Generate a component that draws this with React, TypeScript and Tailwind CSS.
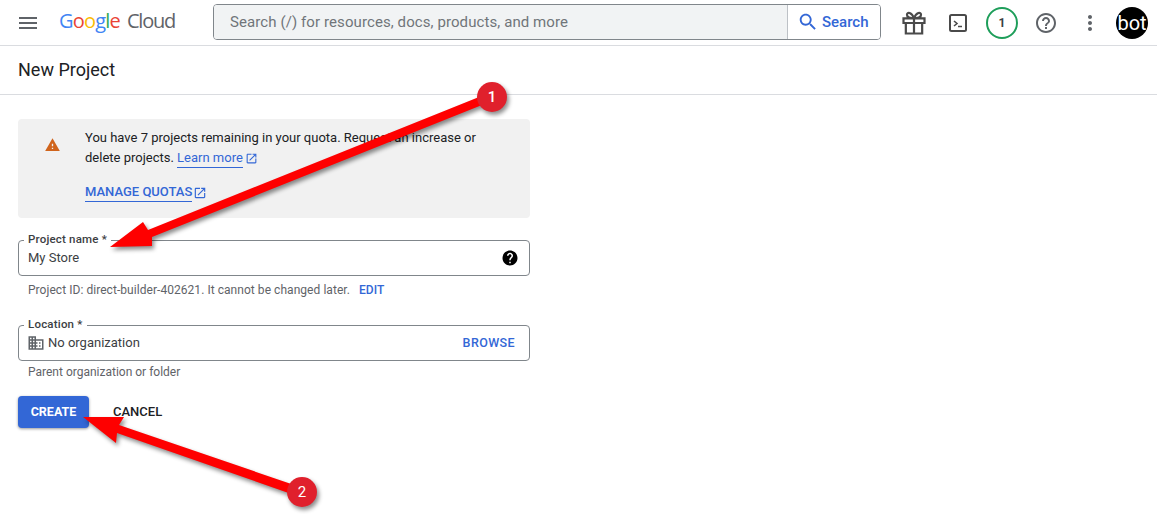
const P = ({ d, className }: { d: string; className: string }) => (
  <svg viewBox="0 0 24 24" className={className} fill="currentColor"><path d={d} /></svg>
);
const OPEN = "M19 19H5V5h7V3H5c-1.11 0-2 .9-2 2v14c0 1.1.89 2 2 2h14c1.1 0 2-.9 2-2v-7h-2v7zM14 3v2h3.59l-9.83 9.83 1.41 1.41L19 6.41V10h2V3h-7z";

function Header() {
  return (
    <header className="flex h-[46px] items-center border-b border-[#dadce0] bg-white">
      <P d="M3 18h18v-2H3v2zm0-5h18v-2H3v2zm0-7v2h18V6H3z" className="ml-[16px] h-6 w-6 text-[#5f6368]" />
      <div className="ml-[19px] -mt-[3px] mb-0 flex w-[154px] items-baseline font-['Open_Sans',sans-serif] text-[20px] tracking-[-0.8px]">
        <span className="text-[#4285f4]">G</span>
        <span className="text-[#ea4335]">o</span>
        <span className="text-[#fbbc05]">o</span>
        <span className="text-[#4285f4]">g</span>
        <span className="text-[#34a853]">l</span>
        <span className="text-[#ea4335]">e</span>
        <span className="ml-[7px] tracking-[-1.2px] text-[#5f6368]">Cloud</span>
      </div>
      <div className="-mt-[1px] flex h-[36px] w-[668px] overflow-hidden rounded-[4px] border border-[#80868b]">
        <div className="flex flex-1 items-center border-r border-[#bdc1c6] bg-[#f1f3f4] pl-[16px] text-[15px] tracking-[0.09px] text-[#70757a]">
          Search (/) for resources, docs, products, and more
        </div>
        <div className="flex w-[92px] items-center gap-[3px] bg-white pl-[9px] text-[15px] font-medium text-[#3367d6]">
          <P d="M15.5 14h-.79l-.28-.27C15.41 12.59 16 11.11 16 9.5 16 5.91 13.09 3 9.5 3S3 5.91 3 9.5 5.91 16 9.5 16c1.61 0 3.09-.59 4.23-1.57l.27.28v.79l5 4.99L20.49 19l-4.99-5zm-6 0C7.01 14 5 11.99 5 9.5S7.01 5 9.5 5 14 7.01 14 9.5 11.99 14 9.5 14z" className="h-[22px] w-[22px]" />
          Search
        </div>
      </div>
      <div className="ml-[21px] flex items-center text-[#5f6368]">
        <svg viewBox="0 0 24 24" className="-mx-[2px] h-[28px] w-[28px] text-[#4a4a4a]" fill="none" stroke="currentColor" strokeWidth="1.9">
          <path d="M3 8h18v4H3zM5 12v9h14v-9M12 8v13M12 8C10 3 6 2 6 5c0 2 3 3 6 3zM12 8c2-5 6-6 6-3 0 2-3 3-6 3z" />
        </svg>
        <svg viewBox="0 0 24 24" className="ml-[20px] h-6 w-6 text-[#4a4a4a]" fill="none" stroke="currentColor" strokeWidth="2">
          <rect x="4" y="4" width="16" height="16" rx="1.5" />
          <path d="M8 10l3 2.5L8 15M12 15.5h4" strokeWidth="1.6" />
        </svg>
        <div className="ml-[16px] flex h-8 w-8 items-center justify-center rounded-full border-2 border-[#1e9e5a] text-[12px] font-bold text-[#3c4043]">1</div>
        <P d="M11 18h2v-2h-2v2zm1-16C6.48 2 2 6.48 2 12s4.48 10 10 10 10-4.48 10-10S17.52 2 12 2zm0 18c-4.41 0-8-3.59-8-8s3.59-8 8-8 8 3.59 8 8-3.59 8-8 8zm0-14c-2.21 0-4 1.79-4 4h2c0-1.1.9-2 2-2s2 .9 2 2c0 2-3 1.75-3 5h2c0-2.25 3-2.5 3-5 0-2.21-1.79-4-4-4z" className="ml-[16px] h-6 w-6" />
        <P d="M12 8c1.1 0 2-.9 2-2s-.9-2-2-2-2 .9-2 2 .9 2 2 2zm0 2c-1.1 0-2 .9-2 2s.9 2 2 2 2-.9 2-2-.9-2-2-2zm0 6c-1.1 0-2 .9-2 2s.9 2 2 2 2-.9 2-2-.9-2-2-2z" className="ml-[20px] h-6 w-6" />
        <div className="ml-[14px] flex h-8 w-8 items-center justify-center overflow-hidden rounded-full bg-black text-[20px] leading-none text-white">bot</div>
      </div>
    </header>
  );
}

function Notice() {
  return (
    <div className="flex h-[99px] rounded-[4px] bg-[#f1f1f1]">
      <P d="M1 21h22L12 2 1 21zm12-3h-2v-2h2v2zm0-4h-2v-4h2v4z" className="ml-[26px] mt-[18px] h-[16px] w-[17px] text-[#d0641c]" />
      <div className="ml-[24px] w-[410px] pt-[9px] text-[13px] leading-[20px] text-[#202124]">
        <div>You have 7 projects remaining in your quota. Request an increase or</div>
        <div className="flex items-center">
          delete projects.&nbsp;<span className="border-b border-[#3367d6] leading-[18px] text-[#3367d6]">Learn more</span>
          <P d={OPEN} className="ml-[2px] h-[13px] w-[13px] text-[#3367d6]" />
        </div>
        <div className="mt-[15px] flex items-center font-medium text-[#3367d6]">
          <span className="border-b border-[#3367d6] leading-[18px]">MANAGE QUOTAS</span>
          <P d={OPEN} className="ml-[1px] h-[14px] w-[14px]" />
        </div>
      </div>
    </div>
  );
}

function Field({ label, children }: { label: string; children: React.ReactNode }) {
  return (
    <div className="relative flex h-[36px] items-center rounded-[4px] border border-[#80868b] pl-[9px] pr-[11px] text-[13px] text-[#3c4043]">
      <span className="absolute -top-[10px] left-[5px] bg-white px-[4px] text-[11.5px] font-medium leading-[16px] tracking-[0.2px] text-[#3c4043]">{label}</span>
      {children}
    </div>
  );
}

function Arrows() {
  return (
    <svg className="pointer-events-none absolute left-0 top-0 h-[514px] w-[1157px] drop-shadow-[2px_3px_2px_rgba(0,0,0,0.45)]" viewBox="0 0 1157 514">
      <polygon fill="#fe0000" points="110,247 143,222 148,230 489,93 492,101 152,237 152,246" />
      <polygon fill="#fe0000" points="83,417 124,417 119,425 303,488 300,497 117,433 116,443" />
      <circle cx="492" cy="97" r="15" fill="#e0202c" />
      <circle cx="302" cy="492" r="15" fill="#e0202c" />
    </svg>
  );
}

export default function App() {
  return (
    <div className="relative h-[514px] w-[1157px] overflow-hidden bg-white font-['Roboto',sans-serif]">
      <Header />
      <div className="flex h-[49px] items-center border-b border-[#dadce0] pb-[2px] pl-[18px] text-[18px] text-[#202124]">New Project</div>
      <main className="ml-[18px] w-[512px] pt-[24px]">
        <Notice />
        <div className="mt-[22px]">
          <Field label="Project name *">
            <span className="flex-1">My Store</span>
            <P d="M12 2C6.48 2 2 6.48 2 12s4.48 10 10 10 10-4.48 10-10S17.52 2 12 2zm1 17h-2v-2h2v2zm2.07-7.75l-.9.92C13.45 12.9 13 13.5 13 15h-2v-.5c0-1.1.45-2.1 1.17-2.83l1.24-1.26c.37-.36.59-.86.59-1.41 0-1.1-.9-2-2-2s-2 .9-2 2H8c0-2.21 1.79-4 4-4s4 1.79 4 4c0 .88-.36 1.68-.93 2.25z" className="-mr-[1px] h-[18px] w-[18px] text-black" />
          </Field>
          <div className="mt-[6px] flex pl-[10px] text-[12px] leading-[16px] tracking-[0.05px] text-[#5f6368]">
            Project ID: direct-builder-402621. It cannot be changed later.
            <span className="ml-[9px] font-medium text-[#3367d6]">EDIT</span>
          </div>
        </div>
        <div className="mt-[27px]">
          <Field label="Location *">
            <P d="M12 7V3H2v18h20V7H12zM6 19H4v-2h2v2zm0-4H4v-2h2v2zm0-4H4V9h2v2zm0-4H4V5h2v2zm4 12H8v-2h2v2zm0-4H8v-2h2v2zm0-4H8V9h2v2zm0-4H8V5h2v2zm10 12h-8v-2h2v-2h-2v-2h2v-2h-2V9h8v10zm-2-8h-2v2h2v-2zm0 4h-2v2h2v-2z" className="-ml-[1px] h-[18px] w-[18px] text-[#5f6368]" />
            <span className="ml-[3px] flex-1">No organization</span>
            <span className="mr-[3px] text-[12.5px] font-medium tracking-[0.4px] text-[#3367d6]">BROWSE</span>
          </Field>
          <div className="mt-[3px] pl-[10px] text-[12px] leading-[16px] text-[#5f6368]">Parent organization or folder</div>
        </div>
        <div className="mt-[16px] flex items-center">
          <button className="h-[32px] w-[71px] rounded-[4px] bg-[#3367d6] text-[12.5px] font-bold text-white shadow-[0_1px_3px_rgba(0,0,0,0.4)]">CREATE</button>
          <span className="ml-[24px] text-[13px] font-medium text-[#202124]">CANCEL</span>
        </div>
      </main>
      <Arrows />
      <div className="absolute left-[477px] top-[82px] flex h-[30px] w-[30px] items-center justify-center text-[15px] font-medium text-white">1</div>
      <div className="absolute left-[287px] top-[477px] flex h-[30px] w-[30px] items-center justify-center text-[15px] text-white">2</div>
    </div>
  );
}
